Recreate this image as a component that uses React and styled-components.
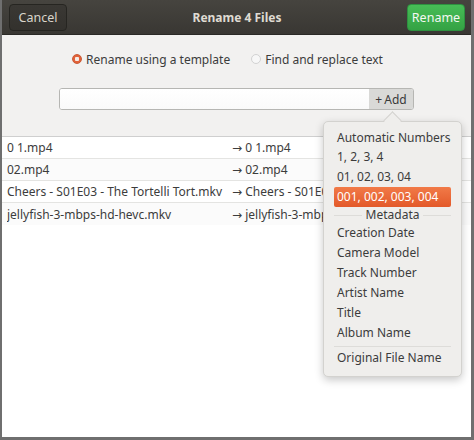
import React from "react";
import styled, { createGlobalStyle } from "styled-components";

const Global = createGlobalStyle`
  html, body { margin: 0; padding: 0; background: #ffffff; }
  body { font-family: "Noto Sans", "DejaVu Sans", sans-serif; }
  * { box-sizing: border-box; }
`;

const Frame = styled.div`
  width: 474px;
  height: 440px;
  display: flex;
  flex-direction: column;
  border-left: 2px solid #6f6f6f;
  border-right: 3px solid #6f6f6f;
  border-bottom: 3px solid #6f6f6f;
  background: #ffffff;
  overflow: hidden;
  font-size: 12px;
  color: #3c3c3c;
`;

const HeaderBar = styled.div`
  height: 35px;
  flex: none;
  display: flex;
  align-items: center;
  justify-content: space-between;
  padding: 0 6px 0 7px;
  background: linear-gradient(#46443f, #393733);
  border-bottom: 1px solid #2a2926;
`;

const HeaderButton = styled.button`
  width: 58px;
  height: 27px;
  border-radius: 4px;
  font-family: inherit;
  font-size: 12.5px;
  padding: 0;
  color: ${(p) => (p.$primary ? "#f4f8f2" : "#d9d5cc")};
  background: ${(p) =>
    p.$primary ? "linear-gradient(#47bd56, #34a244)" : "linear-gradient(#3a3834, #33312d)"};
  border: 1px solid ${(p) => (p.$primary ? "#2e9140" : "#262521")};
`;

const Title = styled.div`
  font-weight: 700;
  font-size: 12px;
  color: #dfdbd2;
`;

const Controls = styled.div`
  flex: none;
  height: 102px;
  background: #f2f1f0;
  border-bottom: 1px solid #cfcfcf;
  display: flex;
  flex-direction: column;
  align-items: center;
  padding-top: 15px;
`;

const RadioRow = styled.div`
  display: flex;
  gap: 21px;
  height: 18px;
  align-items: center;
  padding-right: 18px;
`;

const RadioOption = styled.label`
  display: flex;
  align-items: center;
  gap: 4px;
  font-size: 12px;
  color: #3c3c3c;
`;

const Radio = styled.span`
  width: 10px;
  height: 10px;
  border-radius: 50%;
  display: inline-block;
  background: ${(p) =>
    p.$checked ? "radial-gradient(circle, #f6ece6 0 2px, #e2623a 2.5px)" : "#f7f7f7"};
  border: 1px solid ${(p) => (p.$checked ? "#c95a35" : "#d2d2d2")};
`;

const EntryWrap = styled.div`
  position: relative;
  margin-top: 20px;
`;

const Entry = styled.div`
  width: 355px;
  height: 22px;
  display: flex;
  border: 1px solid #b6b6b3;
  border-radius: 3px;
  overflow: hidden;
  background: #ffffff;
`;

const EntryField = styled.div`
  flex: 1;
  background: linear-gradient(#ffffff, #fafafa);
`;

const AddButton = styled.div`
  width: 44px;
  display: flex;
  align-items: center;
  justify-content: center;
  font-size: 12px;
  color: #3a3a3a;
  background: #d9d9d7;
`;

const Popover = styled.div`
  position: absolute;
  top: 33px;
  left: 264px;
  width: 139px;
  background: #efeeec;
  border: 1px solid #d3d2cf;
  border-radius: 5px;
  box-shadow: 0 3px 8px rgba(0, 0, 0, 0.22);
  padding: 7px 10px 9px;
  display: flex;
  flex-direction: column;
  z-index: 2;

  &::before {
    content: "";
    position: absolute;
    top: -8px;
    left: 62px;
    width: 12px;
    height: 12px;
    background: #efeeec;
    border-left: 1px solid #d3d2cf;
    border-top: 1px solid #d3d2cf;
    transform: rotate(45deg);
    transform-origin: center;
  }
`;

const MenuItem = styled.div`
  flex: none;
  height: ${(p) => p.$h || 20}px;
  line-height: ${(p) => p.$h || 20}px;
  padding-left: 3px;
  font-size: 12px;
  white-space: nowrap;
  border-radius: 2px;
  color: ${(p) => (p.$active ? "#ffffff" : "#3c3c3c")};
  background: ${(p) => (p.$active ? "linear-gradient(#f17a48, #e3592a)" : "transparent")};
`;

const SectionLabel = styled.div`
  flex: none;
  height: 16px;
  line-height: 16px;
  display: flex;
  align-items: center;
  gap: 4px;
  font-size: 12px;
  color: #3c3c3c;

  &::before,
  &::after {
    content: "";
    flex: 1;
    height: 1px;
    background: #dddcd9;
  }
`;

const Separator = styled.div`
  flex: none;
  height: 6px;
  display: flex;
  align-items: center;

  &::after {
    content: "";
    flex: 1;
    height: 1px;
    background: #dddcd9;
  }
`;

const List = styled.div`
  flex: 1;
  background: #ffffff;
`;

const Row = styled.div`
  height: 22px;
  display: grid;
  grid-template-columns: 225px 1fr;
  align-items: center;
  padding-left: 5px;
  font-size: 12px;
  color: #3c3c3c;
  white-space: nowrap;
  overflow: hidden;
  border-bottom: ${(p) => (p.$last ? "none" : "1px solid #e4e4e2")};
  background: ${(p) => (p.$alt ? "#fbfbfb" : "#ffffff")};
`;

const Cell = styled.span`
  overflow: hidden;
`;

const files = [
  "0 1.mp4",
  "02.mp4",
  "Cheers - S01E03 - The Tortelli Tort.mkv",
  "jellyfish-3-mbps-hd-hevc.mkv",
];

export default function App() {
  return (
    <>
      <Global />
      <Frame>
        <HeaderBar>
          <HeaderButton>Cancel</HeaderButton>
          <Title>Rename 4 Files</Title>
          <HeaderButton $primary>Rename</HeaderButton>
        </HeaderBar>
        <Controls>
          <RadioRow>
            <RadioOption>
              <Radio $checked />
              Rename using a template
            </RadioOption>
            <RadioOption>
              <Radio />
              Find and replace text
            </RadioOption>
          </RadioRow>
          <EntryWrap>
            <Entry>
              <EntryField />
              <AddButton>+{"\u2009"}Add</AddButton>
            </Entry>
            <Popover>
              <MenuItem $h={18}>Automatic Numbers</MenuItem>
              <MenuItem>1, 2, 3, 4</MenuItem>
              <MenuItem>01, 02, 03, 04</MenuItem>
              <MenuItem $active>001, 002, 003, 004</MenuItem>
              <SectionLabel>Metadata</SectionLabel>
              <MenuItem>Creation Date</MenuItem>
              <MenuItem>Camera Model</MenuItem>
              <MenuItem>Track Number</MenuItem>
              <MenuItem>Artist Name</MenuItem>
              <MenuItem>Title</MenuItem>
              <MenuItem>Album Name</MenuItem>
              <Separator />
              <MenuItem $h={18}>Original File Name</MenuItem>
            </Popover>
          </EntryWrap>
        </Controls>
        <List>
          {files.map((f, i) => (
            <Row key={f} $last={i === files.length - 1} $alt={i % 2 === 1}>
              <Cell>{f}</Cell>
              <Cell>→ {f}</Cell>
            </Row>
          ))}
        </List>
      </Frame>
    </>
  );
}
